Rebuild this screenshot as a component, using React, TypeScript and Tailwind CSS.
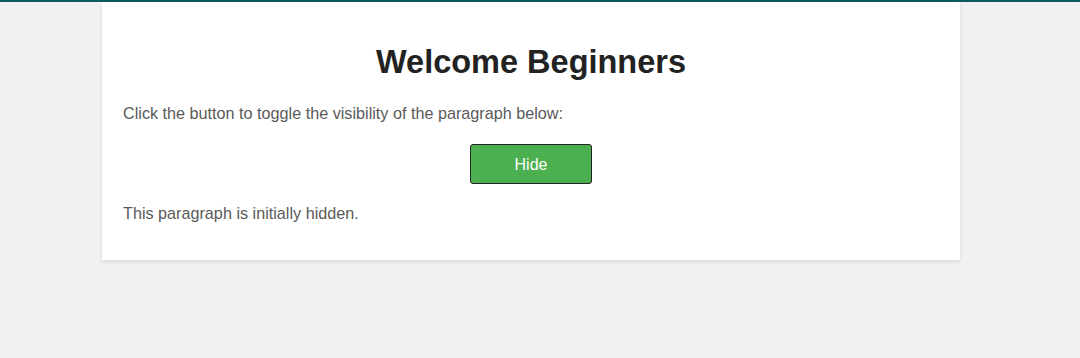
import { useState } from "react";

export default function App() {
  const [visible, setVisible] = useState(true);

  return (
    <div className="min-h-[358px] bg-[#f1f1f1] border-t-2 border-[#0f5761] font-['Liberation_Sans',Arial,sans-serif]">
      <div className="ml-[102px] w-[858px] bg-white px-[21px] pt-[15px] pb-[19px] shadow-[0_2px_4px_rgba(0,0,0,0.1)]">
        <h1 className="text-center text-[32.5px] font-bold text-[#222] mt-[21px] mb-[14px]">Welcome Beginners</h1>
        <p className="text-[16.2px] text-[#5a5a5a] mt-[14px] mb-[19px]">
          Click the button to toggle the visibility of the paragraph below:
        </p>
        <div className="flex justify-center">
          <button
            onClick={() => setVisible(!visible)}
            className="w-[122px] h-[40px] pt-[2px] bg-[#4caf50] text-white text-[16px] border border-[#222] rounded-[3px]"
          >
            {visible ? "Hide" : "Show"}
          </button>
        </div>
        {visible && (
          <p className="text-[16.2px] text-[#5a5a5a] mt-[17px] mb-[16px]">This paragraph is initially hidden.</p>
        )}
      </div>
    </div>
  );
}
